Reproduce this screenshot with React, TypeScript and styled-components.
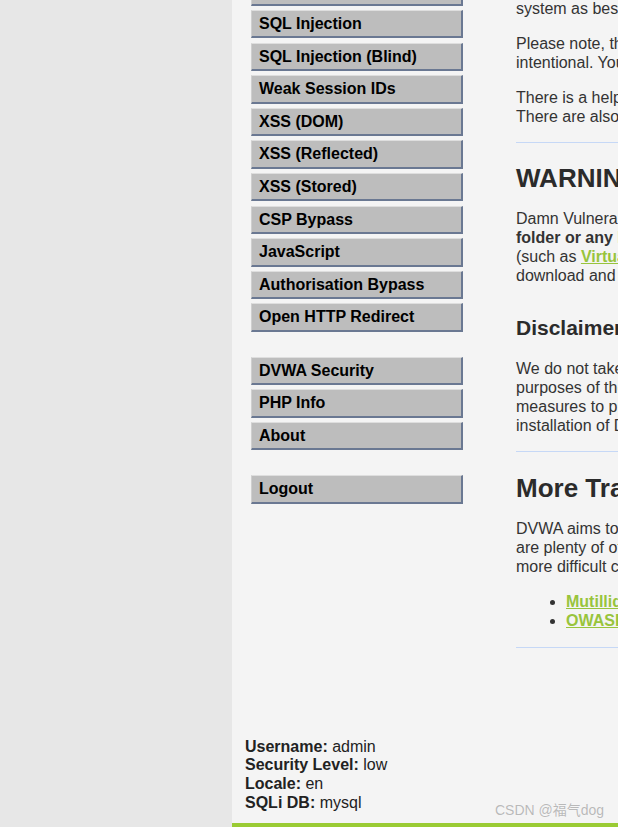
import styled, { createGlobalStyle } from 'styled-components';

const GlobalStyle = createGlobalStyle`
    html, body {
        margin: 0;
        padding: 0;
        overflow: hidden;
        background: #e7e7e7;
        font-family: "Liberation Sans", Arial, sans-serif;
    }
`

const Page = styled.div`
    display: flex;
    height: 827px;
    overflow: hidden;
`

const Gutter = styled.div`
    flex: 0 0 232px;
    background: #e7e7e7;
`

const Container = styled.div`
    position: relative;
    flex: 0 0 900px;
    display: flex;
    flex-direction: column;
    background: #f4f4f4;
`

const Main = styled.div`
    display: flex;
    align-items: flex-start;
`

const Menu = styled.nav`
    flex: 0 0 212px;
    margin: -22.6px 0 0 19px;
`

const MenuGroup = styled.ul`
    display: flex;
    flex-direction: column;
    gap: 4.2px;
    list-style: none;
    margin: 0 0 25px;
    padding: 0;
`

const MenuLink = styled.a`
    display: block;
    box-sizing: border-box;
    width: 212px;
    padding: 4px 5px 3px 7px;
    background: #bdbdbd;
    border-top: 1px solid #dedede;
    border-left: 1px solid #cfcfcf;
    border-right: 2px solid #6a7892;
    border-bottom: 2px solid #6a7892;
    color: #000;
    font-size: 16px;
    font-weight: bold;
    line-height: 18.4px;
    text-decoration: none;
    white-space: nowrap;
`

const Content = styled.div`
    margin: -58.5px 0 0 53px;
    color: #333;
    font-size: 16px;
    line-height: 19px;
    white-space: nowrap;
`

const Para = styled.p`
    margin: 16px 0;

    &:first-child {
        margin-top: 0;
    }
`

const Rule = styled.hr`
    margin: 0;
    border: none;
    height: 1px;
    background: #c6d8f6;
`

const Heading = styled.h2`
    margin: 20.5px 0 16px;
    color: #2b2b2b;
    font-size: 26px;
    line-height: 30px;
`

const SubHeading = styled.h3`
    margin: 31px 0 19px;
    color: #2b2b2b;
    font-size: 21px;
    line-height: 24px;
`

const Strong = styled.em`
    font-style: normal;
    font-weight: bold;
`

const Link = styled.a`
    color: #98c43c;
    font-weight: bold;
    text-decoration: underline;
`

const LinkList = styled.ul`
    margin: 16px 0 17px;
    padding-left: 50px;
    list-style: disc;
`

const Info = styled.div`
    margin: auto 0 10.6px 13px;
    color: #222;
    font-size: 16px;
    line-height: 18.7px;
`

const InfoLabel = styled.b`
    font-weight: bold;
`

const GreenBar = styled.div`
    flex: 0 0 4px;
    background: #9acb34;
`

const Watermark = styled.span`
    position: absolute;
    left: 263px;
    top: 799px;
    color: #b9b9b9;
    font-family: "Liberation Sans", "Noto Sans CJK SC", sans-serif;
    font-size: 14px;
    text-shadow: 0 0 1px #fff;
`

const groups = [
    ['Insecure CAPTCHA', 'SQL Injection', 'SQL Injection (Blind)', 'Weak Session IDs', 'XSS (DOM)',
        'XSS (Reflected)', 'XSS (Stored)', 'CSP Bypass', 'JavaScript', 'Authorisation Bypass', 'Open HTTP Redirect'],
    ['DVWA Security', 'PHP Info', 'About'],
    ['Logout'],
]

const App: React.FC = () => {
    return (
        <>
            <GlobalStyle />
            <Page>
                <Gutter />
                <Container>
                    <Main>
                        <Menu>
                            {groups.map((items, i) => (
                                <MenuGroup key={i}>
                                    {items.map((label) => (
                                        <li key={label}><MenuLink href="#">{label}</MenuLink></li>
                                    ))}
                                </MenuGroup>
                            ))}
                        </Menu>
                        <Content>
                            <Para>
                                It is up to the user how they approach DVWA. Either by working through every module at a fixed level, or selecting any<br />
                                module and working up to reach the highest level they can before moving onto the next one. There is not a fixed object<br />
                                to complete a module; however users should feel that they have successfully exploited the<br />
                                system as best as they possible could by using that particular vulnerability.
                            </Para>
                            <Para>
                                Please note, there are both documented and undocumented vulnerability with this software. This is<br />
                                intentional. You are encouraged to try and discover as many issues as possible.
                            </Para>
                            <Para>
                                There is a help button at the bottom of each page, which allows you to view hints &amp; tips for that vulnerability.<br />
                                There are also additional links for further background reading, which relates to that security issue.
                            </Para>
                            <Rule />
                            <Heading>WARNING!</Heading>
                            <Para>
                                Damn Vulnerable Web Application is damn vulnerable! <Strong>Do not upload it to your hosting provider's public html</Strong><br />
                                <Strong>folder or any Internet facing servers</Strong>, as they will be compromised. It is recommend using a virtual machine<br />
                                (such as <Link href="#">VirtualBox</Link> or <Link href="#">VMware</Link>), which is set to NAT networking mode. Inside a guest machine, you can<br />
                                download and install <Link href="#">XAMPP</Link> for the web server and database.
                            </Para>
                            <SubHeading>Disclaimer</SubHeading>
                            <Para>
                                We do not take responsibility for the way in which any one uses this application (DVWA). We have made the<br />
                                purposes of the application clear and it should not be used maliciously. We have given warnings and taken<br />
                                measures to prevent users from installing DVWA on to live web servers. If your web server is compromised via an<br />
                                installation of DVWA it is not our responsibility it is the responsibility of the person/s who uploaded and installed it.
                            </Para>
                            <Rule />
                            <Heading>More Training Resources</Heading>
                            <Para>
                                DVWA aims to cover the most commonly seen vulnerabilities found in today's web applications. However there<br />
                                are plenty of other issues with web applications. Should you wish to explore any additional attack vectors, or want<br />
                                more difficult challenges, you may wish to look into the following other projects:
                            </Para>
                            <LinkList>
                                <li><Link href="#">Mutillidae</Link></li>
                                <li><Link href="#">OWASP Vulnerable Web Applications Directory</Link></li>
                            </LinkList>
                            <Rule />
                        </Content>
                    </Main>
                    <Info>
                        <InfoLabel>Username:</InfoLabel> admin<br />
                        <InfoLabel>Security Level:</InfoLabel> low<br />
                        <InfoLabel>Locale:</InfoLabel> en<br />
                        <InfoLabel>SQLi DB:</InfoLabel> mysql
                    </Info>
                    <GreenBar />
                    <Watermark>CSDN @福气dog</Watermark>
                </Container>
            </Page>
        </>
    );
}

export default App;
